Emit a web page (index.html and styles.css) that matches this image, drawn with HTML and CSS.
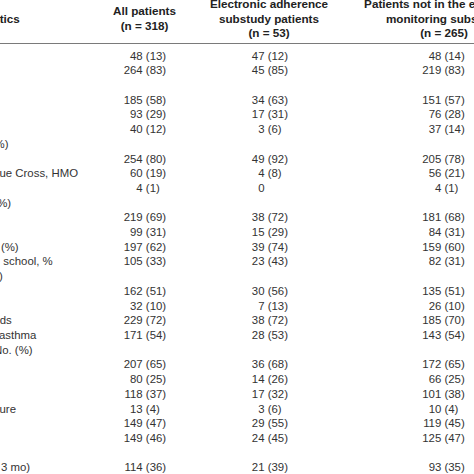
FILE: index.html
```html
<!DOCTYPE html>
<html lang="en">
<head>
<meta charset="utf-8">
<title>Baseline characteristics</title>
<link rel="stylesheet" href="styles.css">
</head>
<body>
<table class="tbl">
  <colgroup>
    <col class="c-label">
    <col class="c-all">
    <col class="c-sub">
    <col class="c-not">
  </colgroup>
  <thead>
    <tr>
      <th class="h-label">Baseline characteristics</th>
      <th>All patients<br>(n = 318)</th>
      <th>Electronic adherence<br>substudy patients<br>(n = 53)</th>
      <th>Patients not in the electronic<br>monitoring substudy<br>(n = 265)</th>
    </tr>
  </thead>
  <tbody>
    <tr class="first"><td class="cat">Age &lt; 50 yr</td><td class="v1"><span class="n">48</span> (13)</td><td class="v2"><span class="n">47</span> (12)</td><td class="v3"><span class="n">48</span> (14)</td></tr>
    <tr><td class="cat">Female sex</td><td class="v1"><span class="n">264</span> (83)</td><td class="v2"><span class="n">45</span> (85)</td><td class="v3"><span class="n">219</span> (83)</td></tr>
    <tr><td class="cat">Race, No. (%)</td><td class="v1"></td><td class="v2"></td><td class="v3"></td></tr>
    <tr><td class="sub">White</td><td class="v1"><span class="n">185</span> (58)</td><td class="v2"><span class="n">34</span> (63)</td><td class="v3"><span class="n">151</span> (57)</td></tr>
    <tr><td class="sub">Black</td><td class="v1"><span class="n">93</span> (29)</td><td class="v2"><span class="n">17</span> (31)</td><td class="v3"><span class="n">76</span> (28)</td></tr>
    <tr><td class="sub">Other</td><td class="v1"><span class="n">40</span> (12)</td><td class="v2"><span class="n">3</span> (6)</td><td class="v3"><span class="n">37</span> (14)</td></tr>
    <tr><td class="cat">Insurance status, No. (%)</td><td class="v1"></td><td class="v2"></td><td class="v3"></td></tr>
    <tr><td class="sub">Medicaid</td><td class="v1"><span class="n">254</span> (80)</td><td class="v2"><span class="n">49</span> (92)</td><td class="v3"><span class="n">205</span> (78)</td></tr>
    <tr><td class="sub">Commercial/group, Blue Cross, HMO</td><td class="v1"><span class="n">60</span> (19)</td><td class="v2"><span class="n">4</span> (8)</td><td class="v3"><span class="n">56</span> (21)</td></tr>
    <tr><td class="sub">None</td><td class="v1"><span class="n">4</span> (1)</td><td class="v2"><span class="n">0</span></td><td class="v3"><span class="n">4</span> (1)</td></tr>
    <tr><td class="cat">Educational level, No. (%)</td><td class="v1"></td><td class="v2"></td><td class="v3"></td></tr>
    <tr><td class="sub">&le; High school</td><td class="v1"><span class="n">219</span> (69)</td><td class="v2"><span class="n">38</span> (72)</td><td class="v3"><span class="n">181</span> (68)</td></tr>
    <tr><td class="sub">&gt; High school</td><td class="v1"><span class="n">99</span> (31)</td><td class="v2"><span class="n">15</span> (29)</td><td class="v3"><span class="n">84</span> (31)</td></tr>
    <tr><td class="cat">Employed full-time, No. (%)</td><td class="v1"><span class="n">197</span> (62)</td><td class="v2"><span class="n">39</span> (74)</td><td class="v3"><span class="n">159</span> (60)</td></tr>
    <tr><td class="sub">Did not complete high school, %</td><td class="v1"><span class="n">105</span> (33)</td><td class="v2"><span class="n">23</span> (43)</td><td class="v3"><span class="n">82</span> (31)</td></tr>
    <tr><td class="cat">Smoking status, No. (%)</td><td class="v1"></td><td class="v2"></td><td class="v3"></td></tr>
    <tr><td class="sub">Never</td><td class="v1"><span class="n">162</span> (51)</td><td class="v2"><span class="n">30</span> (56)</td><td class="v3"><span class="n">135</span> (51)</td></tr>
    <tr><td class="sub">Former</td><td class="v1"><span class="n">32</span> (10)</td><td class="v2"><span class="n">7</span> (13)</td><td class="v3"><span class="n">26</span> (10)</td></tr>
    <tr><td class="cat">On inhaled corticosteroids</td><td class="v1"><span class="n">229</span> (72)</td><td class="v2"><span class="n">38</span> (72)</td><td class="v3"><span class="n">185</span> (70)</td></tr>
    <tr><td class="cat">Prior hospitalization for asthma</td><td class="v1"><span class="n">171</span> (54)</td><td class="v2"><span class="n">28</span> (53)</td><td class="v3"><span class="n">143</span> (54)</td></tr>
    <tr><td class="cat">Coexisting conditions, No. (%)</td><td class="v1"></td><td class="v2"></td><td class="v3"></td></tr>
    <tr><td class="sub">Allergic rhinitis</td><td class="v1"><span class="n">207</span> (65)</td><td class="v2"><span class="n">36</span> (68)</td><td class="v3"><span class="n">172</span> (65)</td></tr>
    <tr><td class="sub">Obesity</td><td class="v1"><span class="n">80</span> (25)</td><td class="v2"><span class="n">14</span> (26)</td><td class="v3"><span class="n">66</span> (25)</td></tr>
    <tr><td class="sub">Depression</td><td class="v1"><span class="n">118</span> (37)</td><td class="v2"><span class="n">17</span> (32)</td><td class="v3"><span class="n">101</span> (38)</td></tr>
    <tr><td class="sub">Congestive Heart Failure</td><td class="v1"><span class="n">13</span> (4)</td><td class="v2"><span class="n">3</span> (6)</td><td class="v3"><span class="n">10</span> (4)</td></tr>
    <tr><td class="sub">Hypertension</td><td class="v1"><span class="n">149</span> (47)</td><td class="v2"><span class="n">29</span> (55)</td><td class="v3"><span class="n">119</span> (45)</td></tr>
    <tr><td class="sub">Diabetes</td><td class="v1"><span class="n">149</span> (46)</td><td class="v2"><span class="n">24</span> (45)</td><td class="v3"><span class="n">125</span> (47)</td></tr>
    <tr><td class="cat">Health care use</td><td class="v1"></td><td class="v2"></td><td class="v3"></td></tr>
    <tr><td class="cat">Unscheduled visit (past 3 mo)</td><td class="v1"><span class="n">114</span> (36)</td><td class="v2"><span class="n">21</span> (39)</td><td class="v3"><span class="n">93</span> (35)</td></tr>
  </tbody>
</table>
</body>
</html>
```
FILE: styles.css
```css
html, body {
  margin: 0;
  padding: 0;
  overflow: hidden;
  background: #ffffff;
}

body {
  font-family: "Liberation Sans", Arial, sans-serif;
  color: #333333;
}

.tbl {
  border-collapse: collapse;
  border-spacing: 0;
  table-layout: fixed;
  width: 659px;
  margin-left: -120px;
  margin-top: -3px;
}

.c-label { width: 220px; }
.c-all { width: 89px; }
.c-sub { width: 160px; }
.c-not { width: 190px; }

.tbl th {
  font-size: 11.7px;
  font-weight: bold;
  color: #222222;
  line-height: 14.5px;
  text-align: center;
  vertical-align: middle;
  padding: 0 0 2.5px 0;
  white-space: nowrap;
  border-bottom: 1px solid #7a7a7a;
}

.tbl th.h-label {
  text-align: left;
  padding-left: 6px;
}

.tbl td {
  font-size: 11.4px;
  line-height: 14.7px;
  padding: 0;
  white-space: nowrap;
  vertical-align: middle;
}

.tbl tr.first td {
  padding-top: 4.65px;
}

.cat { padding-left: 0; }
.tbl td.sub { padding-left: 10px; }

.tbl td.v1 { padding-left: 22.7px; }
.tbl td.v2 { padding-left: 55.5px; }
.tbl td.v3 { padding-left: 72.3px; }

.n {
  display: inline-block;
  width: 20px;
  text-align: right;
}
```
